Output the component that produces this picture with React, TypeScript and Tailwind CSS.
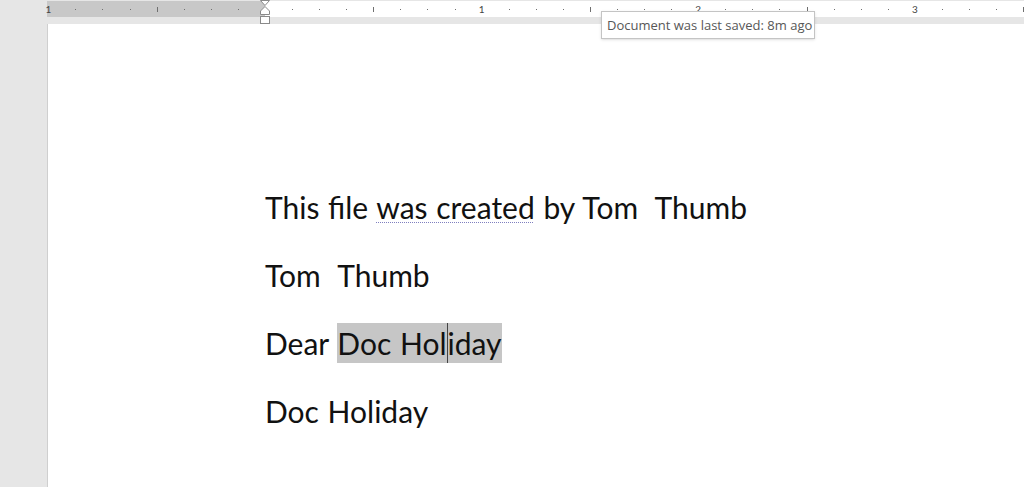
import React from 'react';

// one cell per eighth of an inch; the mark sits on the cell's left edge
const RulerCell: React.FC<{ i: number }> = ({ i }) => {
  let mark: React.ReactNode = null;
  if (i === 0) {
    mark = null;
  } else if (i % 8 === 0) {
    mark = (
      <span className="-translate-x-1/2 text-[10px] leading-[12px] text-[#444]">{Math.abs(i / 8)}</span>
    );
  } else if (i % 4 === 0) {
    mark = <span className="h-[5px] w-px bg-[#6f6f6f]" />;
  } else {
    mark = <span className="mt-[1px] h-px w-px bg-[#6f6f6f]" />;
  }
  return <div className="flex h-full w-[27.09px] shrink-0 items-center">{mark}</div>;
};

const margin = [-8, -7, -6, -5, -4, -3, -2, -1];
const body = Array.from({ length: 29 }, (_, i) => i);

const Ruler: React.FC = () => (
  <div className="mt-[1px] ml-[47px] flex h-[16px] bg-white">
    <div className="flex w-[218px] shrink-0 bg-[#c8c8c8] pl-[1.3px]">
      {margin.map((i) => (
        <RulerCell key={i} i={i} />
      ))}
    </div>
    <div className="flex min-w-0 flex-1 overflow-hidden">
      {body.map((i) => (
        <RulerCell key={i} i={i} />
      ))}
    </div>
  </div>
);

const IndentMarker: React.FC = () => (
  <svg className="absolute left-[260px] top-0" width="10" height="25" viewBox="0 0 10 25">
    <polygon points="0.5,0.5 9.5,0.5 5,5.5" fill="#fff" stroke="#8a8a8a" />
    <polygon points="5,6.5 9.5,11 9.5,14.5 0.5,14.5 0.5,11" fill="#fff" stroke="#8a8a8a" />
    <rect x="0.5" y="16.5" width="9" height="7" fill="#fff" stroke="#8a8a8a" />
  </svg>
);

export default function App() {
  return (
    <div className="relative flex h-[487px] w-[1024px] flex-col overflow-hidden bg-[#e6e6e6] font-['Lato',sans-serif]">
      <div className="h-[24px] shrink-0">
        <Ruler />
      </div>
      <IndentMarker />

      <div className="flex flex-1">
        <div className="w-[48px] shrink-0 border-r border-[#cfcfcf]" />
        <div className="flex-1 bg-white pl-[217px] pt-[149px] text-[30px] text-[#111] [word-spacing:1px]">
          <p className="leading-[68px]">
            This file{' '}
            <span className="underline decoration-dotted decoration-[#7f7fbf] decoration-1 underline-offset-[3px]">
              was created
            </span>{' '}
            by Tom&nbsp; Thumb
          </p>
          <p className="leading-[68px]">Tom&nbsp; Thumb</p>
          <p className="leading-[68px]">
            Dear{' '}
            <span className="inline-block h-[40px] bg-[#c6c6c6] leading-[40px]">
              Doc Hol
              <span className="inline-block h-[40px] w-0 border-l border-[#444] align-top" />
              iday
            </span>
          </p>
          <p className="leading-[68px]">Doc Holiday</p>
        </div>
      </div>

      <div className="absolute left-[601px] top-[11px] h-[28px] w-[214px] whitespace-nowrap border border-[#c4c4c4] bg-white px-[5px] font-['Open_Sans',sans-serif] text-[13px] leading-[26px] text-[#575757] shadow-sm [word-spacing:normal]">
        Document was last saved: 8m ago
      </div>
    </div>
  );
}
